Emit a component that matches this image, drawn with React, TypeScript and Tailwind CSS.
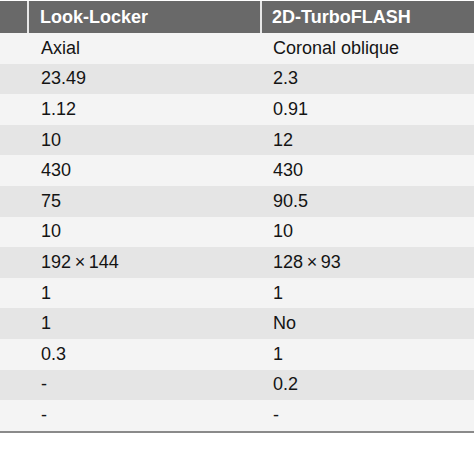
const rows: [string, string][] = [
  ["Axial", "Coronal oblique"],
  ["23.49", "2.3"],
  ["1.12", "0.91"],
  ["10", "12"],
  ["430", "430"],
  ["75", "90.5"],
  ["10", "10"],
  ["192\u2009×\u2009144", "128\u2009×\u200993"],
  ["1", "1"],
  ["1", "No"],
  ["0.3", "1"],
  ["-", "0.2"],
  ["-", "-"],
];

export default function App() {
  return (
    <div className="w-[474px] h-[474px] bg-white pt-[1px] font-['Liberation_Sans',Arial,sans-serif] text-[18px] text-[#141414]">
      <div className="border-b-2 border-[#8a8a8a]">
        {/* Header */}
        <div className="grid grid-cols-[29px_233px_1fr] h-[32px] bg-[#696969] text-white font-bold text-[18px]">
          <div className="border-r-2 border-[#e8e8e8]" />
          <div className="flex items-center pl-[11px] border-r-2 border-[#e8e8e8]">Look-Locker</div>
          <div className="flex items-center pl-[10px]">2D-TurboFLASH</div>
        </div>

        {/* Body */}
        {rows.map(([a, b], i) => (
          <div
            key={i}
            className={`grid grid-cols-[29px_233px_1fr] h-[30.6px] ${i % 2 === 0 ? "bg-[#f4f4f4]" : "bg-[#e5e5e5]"}`}
          >
            <div />
            <div className="flex items-center pl-[12px]">{a}</div>
            <div className="flex items-center pl-[11px]">{b}</div>
          </div>
        ))}
      </div>
    </div>
  );
}
